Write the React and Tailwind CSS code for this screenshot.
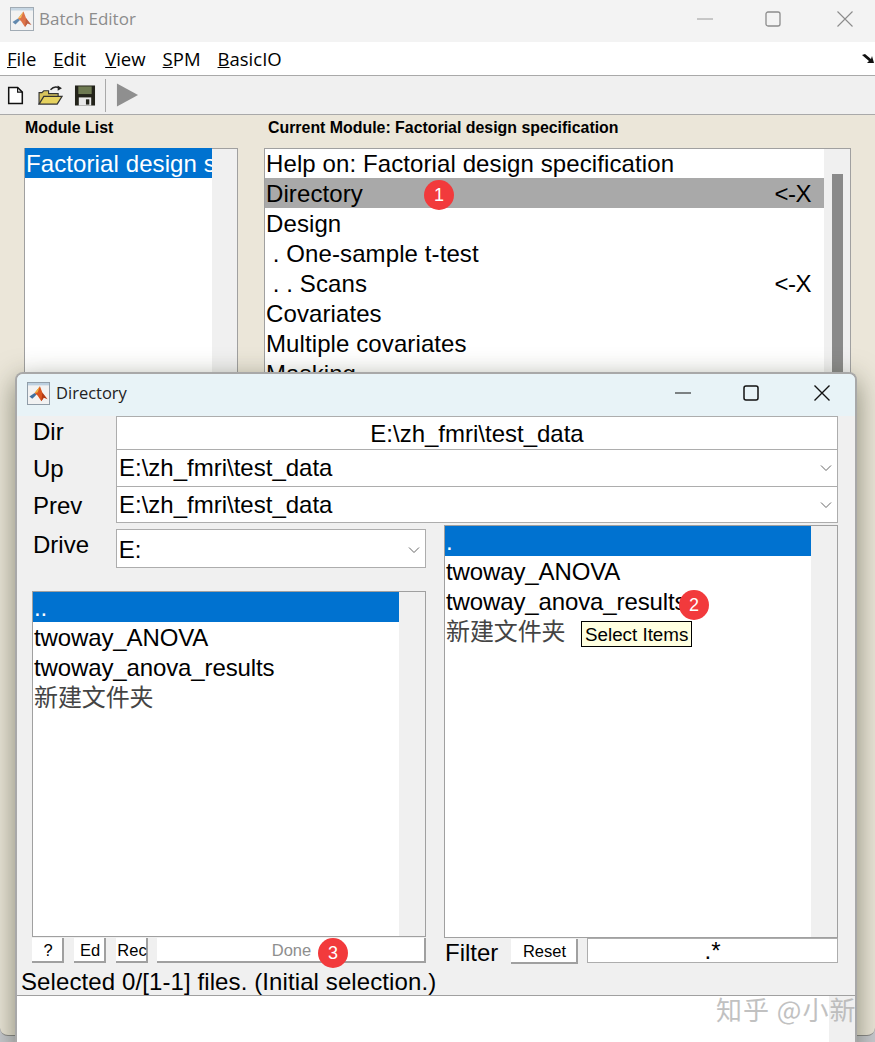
import React from 'react';

const ARIAL = 'font-["Liberation_Sans",Arial,"Noto_Sans_CJK_SC",sans-serif]';

const MatlabIcon = ({ className }) => (
  <svg viewBox="0 0 24 24" className={className}>
    <rect x="0.5" y="0.5" width="23" height="23" fill="#f2f2f2" stroke="#8d9aa5" />
    <rect x="1" y="1" width="22" height="2.5" fill="#bcd0e0" />
    <path d="M2.5 15 L8 11.5 L10 13 L8 15 L5.5 17.5 Z" fill="#3f6f9e" />
    <path d="M8 11.5 L13.5 4.5 L16 11 L18 15.5 L15 20 L11 14 Z" fill="#d9541e" />
    <path d="M13.5 4.5 L11 11 L8 11.5 Z" fill="#f0b43c" />
    <path d="M16 11 L21.5 18 L17.5 16.5 L15 20 Z" fill="#b23a14" />
  </svg>
);

const NewIcon = () => (
  <svg viewBox="0 0 20 22" className="h-[19px] w-[17px]">
    <path d="M2 1.5 H12.5 L18 7 V20.5 H2 Z" fill="#fff" stroke="#111" strokeWidth="1.8" />
    <path d="M12.5 1.5 V7 H18" fill="none" stroke="#111" strokeWidth="1.4" />
  </svg>
);

const OpenIcon = () => (
  <svg viewBox="0 0 26 22" className="h-[21px] w-[25px]">
    <path d="M1 20 V8 H4 L6 6 H11 V9 H21 V12" fill="#d8c45c" stroke="#333" strokeWidth="1.2" />
    <path d="M1 20 L6 12 H25 L20 20 Z" fill="#e6d25f" stroke="#333" strokeWidth="1.3" />
    <path d="M13 5 Q17 0.5 22 3" fill="none" stroke="#222" strokeWidth="1.5" />
    <path d="M20.5 0.5 L25 3.5 L20.5 6 Z" fill="#222" />
  </svg>
);

const SaveIcon = () => (
  <svg viewBox="0 0 22 22" className="h-[21px] w-[22px]">
    <rect x="0.5" y="0.5" width="21" height="21" fill="#23231a" />
    <rect x="4" y="1.5" width="14" height="8" fill="#6e7a52" />
    <rect x="4.5" y="13" width="13" height="8.5" fill="#e8e8e8" />
    <rect x="12" y="15" width="3.5" height="5.5" fill="#23231a" />
  </svg>
);

const Badge = ({ n, className }) => (
  <div className={`absolute flex h-[30px] w-[30px] items-center justify-center rounded-full bg-[#f23a3c] text-[18px] text-white ${className}`}>
    {n}
  </div>
);

const Combo = ({ children, className = '' }) => (
  <div className={`flex items-center justify-between border border-[#adadad] bg-white pl-[2px] pr-[5px] ${className}`}>
    <span>{children}</span>
    <svg viewBox="0 0 12 8" className="h-[8px] w-3">
      <path d="M1 1.5 L6 6.5 L11 1.5" fill="none" stroke="#666" strokeWidth="1" />
    </svg>
  </div>
);

const FileList = ({ selected, className = '' }) => (
  <div className={`flex overflow-hidden border border-[#a0a0a0] bg-white ${className}`}>
    <div className="min-w-0 flex-1 leading-[32px] tracking-[-0.12px]">
      <div className="h-[30px] bg-[#0072d0] pl-px text-white">{selected}</div>
      <div className="h-[30px] pl-px">twoway_ANOVA</div>
      <div className="h-[30px] pl-px">twoway_anova_results</div>
      <div className="h-[30px] pl-px text-[#444]">新建文件夹</div>
    </div>
    <div className="w-[26px] bg-[#f0f0f0]" />
  </div>
);

const PushButton = ({ children, className = '' }) => (
  <button className={`flex h-[25px] items-center justify-center border-r-2 border-b-2 border-[#a0a0a0] bg-white pt-[2px] pl-[2px] text-[16.5px] leading-none text-black ${className}`}>
    {children}
  </button>
);

const moduleItems = [
  { label: 'Help on: Factorial design specification' },
  { label: 'Directory', mark: '<-X', active: true },
  { label: 'Design' },
  { label: ' . One-sample t-test' },
  { label: ' . . Scans', mark: '<-X' },
  { label: 'Covariates' },
  { label: 'Multiple covariates' },
  { label: 'Masking' },
];

export default function App() {
  return (
    <div className={`relative h-[1042px] w-[875px] overflow-hidden bg-[#c8cad0] ${ARIAL} text-black`}>
      {/* Batch Editor window */}
      <div className="flex h-[1036px] flex-col overflow-hidden rounded-b-lg border-b border-[#8a8a8a] bg-[#ebe6d9]">
        <div className="flex h-[42px] shrink-0 items-center justify-between bg-[#f3f3f3] pb-[4px] pl-[10px]">
          <div className="flex items-center gap-[5px]">
            <MatlabIcon className="h-6 w-6 opacity-80" />
            <span className='font-["Open_Sans",sans-serif] text-[17px] text-[#8c8c8c]'>Batch Editor</span>
          </div>
          <div className="flex items-center">
            <svg viewBox="0 0 16 16" className="mr-[52px] h-4 w-4">
              <path d="M0 8 H16" stroke="#9a9a9a" strokeWidth="1" />
            </svg>
            <svg viewBox="0 0 16 16" className="mr-[56px] h-4 w-4">
              <rect x="1" y="1" width="14" height="14" rx="2" fill="none" stroke="#8c8c8c" strokeWidth="1.3" />
            </svg>
            <svg viewBox="0 0 16 16" className="mr-[22px] h-4 w-4">
              <path d="M0.5 0.5 L15.5 15.5 M15.5 0.5 L0.5 15.5" stroke="#8c8c8c" strokeWidth="1.1" />
            </svg>
          </div>
        </div>

        <div className='flex h-[34px] shrink-0 items-center justify-between border-b border-[#a9a9a9] bg-white pl-[7px] font-["Open_Sans",sans-serif] text-[18.5px]'>
          <div className="flex gap-[17px]">
            <span><u>F</u>ile</span>
            <span><u>E</u>dit</span>
            <span className="ml-[2px]"><u>V</u>iew</span>
            <span><u>S</u>PM</span>
            <span><u>B</u>asicIO</span>
          </div>
          <svg viewBox="0 0 12 10" className="mr-[1px] h-[10px] w-3">
            <path d="M0 1 L3 0 L9 5 L10 2 L12 9 L5 9 L7 7 Z" fill="#111" />
          </svg>
        </div>

        <div className="flex h-[39px] shrink-0 items-center border-b border-[#a9a9a9] bg-[#f0f0f0] pl-[7px]">
          <NewIcon />
          <div className="ml-[14px]"><OpenIcon /></div>
          <div className="ml-[11px]"><SaveIcon /></div>
          <div className="ml-[9px] h-[33px] w-px bg-[#a9a9a9]" />
          <svg viewBox="0 0 24 24" className="ml-[10px] h-6 w-[23px]">
            <path d="M1 0 L23 12 L1 24 Z" fill="#8f8f8f" />
          </svg>
        </div>

        <div className="flex flex-1 pl-6 pt-[3px]">
          <div className="w-[214px] shrink-0">
            <div className="h-[30px] pl-px text-[15.9px] leading-[20px] font-bold">Module List</div>
            <div className="flex h-[400px] border border-[#a0a0a0] bg-white">
              <div className="-mt-px h-[30px] min-w-0 flex-1 overflow-hidden whitespace-nowrap bg-[#0072d0] pl-px text-[24px] leading-[32px] tracking-[0.1px] text-white">
                Factorial design specification
              </div>
              <div className="w-[25px] bg-[#f0f0f0]" />
            </div>
          </div>
          <div className="ml-[26px] w-[587px] shrink-0">
            <div className="h-[30px] pl-[4px] text-[15.9px] leading-[20px] font-bold">Current Module: Factorial design specification</div>
            <div className="flex h-[400px] border border-[#a0a0a0] bg-white">
              <div className="-mt-px min-w-0 flex-1 text-[24px] leading-[32px] tracking-[0.1px] whitespace-pre">
                {moduleItems.map(item => (
                  <div key={item.label} className={`flex h-[30px] justify-between pl-px pr-[13px] ${item.active ? 'bg-[#a9a9a9]' : ''}`}>
                    <span>{item.label}</span>
                    {item.mark && <span className="tracking-[-0.5px]">{item.mark}</span>}
                  </div>
                ))}
              </div>
              <div className="w-[26px] bg-[#f0f0f0] pl-[8px] pt-[25px]">
                <div className="h-[300px] w-[11px] bg-[#8a8a8a]" />
              </div>
            </div>
          </div>
        </div>
      </div>

      {/* Directory dialog */}
      <div className="absolute top-[372px] left-[15px] flex h-[680px] w-[842px] flex-col overflow-hidden rounded-t-lg border-x-2 border-t-2 border-[#a8a8a8] bg-[#f0f0f0] text-[24px] shadow-[0_8px_28px_rgba(50,55,30,0.55)]">
        <div className="flex h-[42px] shrink-0 items-center justify-between bg-[#e8f3f7] pb-[4px] pl-[10px]">
          <div className="flex items-center gap-[6px]">
            <MatlabIcon className="h-[23px] w-[23px]" />
            <span className='font-["Open_Sans",sans-serif] text-[16.5px] text-[#222]'>Directory</span>
          </div>
          <div className="flex items-center">
            <svg viewBox="0 0 16 16" className="mr-[52px] h-4 w-4">
              <path d="M0 8 H16" stroke="#111" strokeWidth="1.2" />
            </svg>
            <svg viewBox="0 0 16 16" className="mr-[55px] h-4 w-4">
              <rect x="1" y="1" width="14" height="14" rx="2" fill="none" stroke="#111" strokeWidth="1.5" />
            </svg>
            <svg viewBox="0 0 16 16" className="mr-[25px] h-4 w-4">
              <path d="M0.5 0.5 L15.5 15.5 M15.5 0.5 L0.5 15.5" stroke="#111" strokeWidth="1.4" />
            </svg>
          </div>
        </div>

        <div className="flex h-[33px] shrink-0 pl-4">
          <div className="w-[83px] leading-[32px]">Dir</div>
          <div className="w-[722px] border border-b-0 border-[#adadad] bg-white text-center leading-[34px]">E:\zh_fmri\test_data</div>
        </div>
        <div className="flex h-[37px] shrink-0 pl-4">
          <div className="w-[83px] leading-[40px]">Up</div>
          <Combo className="w-[722px] border-b-0 leading-[36px]">E:\zh_fmri\test_data</Combo>
        </div>
        <div className="flex h-[37px] shrink-0 pl-4">
          <div className="w-[83px] leading-[40px]">Prev</div>
          <Combo className="w-[722px] leading-[34px]">E:\zh_fmri\test_data</Combo>
        </div>

        <div className="flex flex-1 pl-[15px]">
          <div className="w-[394px] shrink-0">
            <div className="mt-[6px] flex h-[39px] pl-px">
              <div className="w-[83px] leading-[32px]">Drive</div>
              <Combo className="w-[311px] pt-[3px] leading-[36px]">E:</Combo>
            </div>
            <FileList selected=".." className="mt-[23px] h-[346px]" />
            <div className="mt-px flex items-start">
              <PushButton className="w-[32px]">?</PushButton>
              <PushButton className="ml-[10px] w-[32px]">Ed</PushButton>
              <PushButton className="ml-[10px] w-[32px]">Rec</PushButton>
              <PushButton className="ml-[9px] w-[269px] !text-[#8e8e8e]">Done</PushButton>
            </div>
          </div>
          <div className="ml-[18px] w-[394px] shrink-0">
            <FileList selected="." className="mt-[2px] h-[413px]" />
            <div className="flex h-[26px] items-start">
              <div className="w-[67px] pl-px leading-[30px]">Filter</div>
              <PushButton className="mt-px w-[67px]">Reset</PushButton>
              <div className="ml-[9px] h-[25px] w-[251px] border border-[#adadad] bg-white text-center text-[24px] leading-[24px]">.*</div>
            </div>
          </div>
        </div>

        <div className="absolute top-[594px] left-1 text-[24px] leading-[28px] tracking-[0.1px] whitespace-nowrap">Selected 0/[1-1] files. (Initial selection.)</div>
        <div className="absolute top-[621px] right-0 left-0 flex h-[60px] border-t border-[#a0a0a0] bg-white">
          <div className="flex-1" />
          <div className="w-[26px] bg-[#f0f0f0]" />
        </div>
      </div>

      {/* Tooltip */}
      <div className="absolute top-[621px] left-[581px] h-[26px] border border-black bg-[#ffffe1] px-[3px] text-[18.8px] leading-[25px]">Select Items</div>

      {/* Numbered marks */}
      <Badge n="1" className="top-[180px] left-[424px]" />
      <Badge n="2" className="top-[590px] left-[679px]" />
      <Badge n="3" className="top-[938px] left-[318px]" />

      {/* Watermark */}
      <div className='absolute top-[989px] left-[716px] font-["Noto_Sans_CJK_SC",sans-serif] text-[26px] tracking-[1px] whitespace-nowrap text-[#a8a8a8] opacity-70'>知乎 @小新</div>
    </div>
  );
}
